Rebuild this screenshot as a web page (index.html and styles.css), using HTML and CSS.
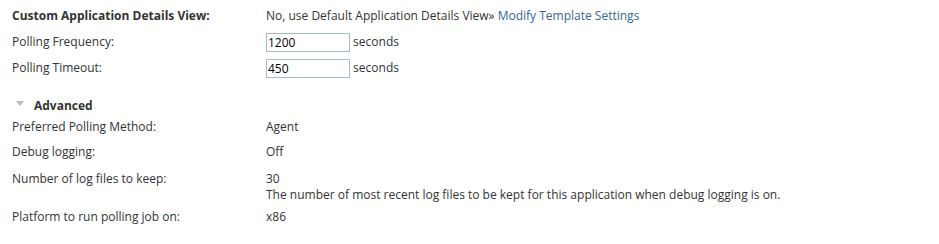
FILE: index.html
```html
<!DOCTYPE html>
<html lang="en">
<head>
<meta charset="UTF-8">
<title>Application Template Settings</title>
<link rel="stylesheet" href="styles.css">
</head>
<body>
<div class="settings">
    <div class="row">
        <div class="label bold">Custom Application Details View:</div>
        <div class="value">No, use Default Application Details View&raquo; <a href="#" class="link">Modify Template Settings</a></div>
    </div>
    <div class="row">
        <div class="label">Polling Frequency:</div>
        <div class="value"><input class="text-input" type="text" value="1200"> seconds</div>
    </div>
    <div class="row">
        <div class="label">Polling Timeout:</div>
        <div class="value"><input class="text-input" type="text" value="450"> seconds</div>
    </div>

    <div class="section-header">
        <span class="arrow"></span>
        <span class="bold">Advanced</span>
    </div>

    <div class="adv-row">
        <div class="label">Preferred Polling Method:</div>
        <div class="value">Agent</div>
    </div>
    <div class="adv-row">
        <div class="label">Debug logging:</div>
        <div class="value">Off</div>
    </div>
    <div class="adv-row with-hint">
        <div class="label">Number of log files to keep:</div>
        <div class="value">30<div class="hint">The number of most recent log files to be kept for this application when debug logging is on.</div></div>
    </div>
    <div class="adv-row">
        <div class="label">Platform to run polling job on:</div>
        <div class="value">x86</div>
    </div>
</div>
</body>
</html>
```

FILE: styles.css
```css
body {
    margin: 0;
    padding: 0;
    font-family: "Open Sans", Arial, sans-serif;
    font-size: 12px;
    color: #333;
    background-color: #fff;
}

.settings {
    padding: 3px 0 0 12px;
}

.row {
    display: grid;
    grid-template-columns: 254px 1fr;
    align-items: center;
    height: 26px;
    line-height: 16px;
}

.bold {
    font-weight: bold;
}

.link {
    color: #336699;
    text-decoration: none;
}

.text-input {
    width: 84px;
    height: 19px;
    box-sizing: border-box;
    margin: 0;
    padding: 0 1px;
    border: 1px solid #a5b9d2;
    font-family: "Open Sans", Arial, sans-serif;
    font-size: 12px;
    color: #000;
    vertical-align: middle;
}

.section-header {
    display: flex;
    align-items: center;
    margin: 17px 0 0 4px;
    height: 16px;
    line-height: 16px;
}

.arrow {
    width: 0;
    height: 0;
    border-left: 4px solid transparent;
    border-right: 4px solid transparent;
    border-top: 5px solid #bbb;
    margin-right: 10px;
    margin-top: -6px;
}

.adv-row {
    display: grid;
    grid-template-columns: 254px 1fr;
    padding: 5px 0 4px;
    line-height: 16px;
}

.with-hint {
    padding-top: 7px;
}

.hint {
    margin-bottom: -3px;
}
```
